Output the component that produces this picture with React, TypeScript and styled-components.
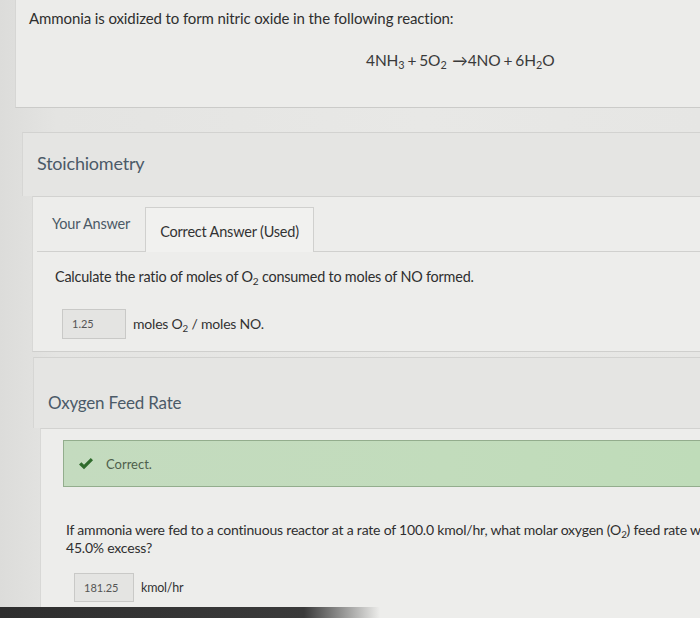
import { ReactNode } from "react";
import styled, { createGlobalStyle } from "styled-components";

const GlobalStyle = createGlobalStyle`
  html, body {
    margin: 0;
    padding: 0;
    background: #e2e2e0;
    font-family: Lato, "Open Sans", "Liberation Sans", sans-serif;
    color: #333;
    overflow: hidden;
  }
`;

const Page = styled.div`
  width: 700px;
  height: 618px;
  position: relative;
  overflow: hidden;
  background: linear-gradient(90deg, #dcdcda 0%, #e4e4e2 8%, #e8e8e6 60%, #e6e6e4 100%);
`;

const IntroPanel = styled.div`
  margin-left: 15px;
  height: 108px;
  box-sizing: border-box;
  padding: 9px 0 0 13px;
  background: #ececea;
  border-left: 1px solid #d6d6d4;
  border-bottom: 1px solid #cbcbc9;
`;

const IntroText = styled.p`
  margin: 0;
  font-size: 15px;
  letter-spacing: -0.1px;
  color: #2f2f2f;
`;

const Equation = styled.div`
  margin: 24px 0 0 337px;
  font-size: 15.5px;
  color: #3a3a3a;
  letter-spacing: -0.1px;
  word-spacing: -1px;
`;

const Section = styled.section<{ $top: number; $left: number }>`
  margin-top: ${({ $top }) => $top}px;
  margin-left: ${({ $left }) => $left}px;
`;

const SectionHeader = styled.div<{ $height: number; $pad: number }>`
  height: ${({ $height }) => $height}px;
  box-sizing: border-box;
  display: flex;
  align-items: flex-end;
  padding: 0 0 ${({ $pad }) => $pad}px 14px;
  background: #e5e5e3;
  border-top: 1px solid #d2d2d0;
  border-left: 1px solid #d6d6d4;
`;

const SectionTitle = styled.h2<{ $size: number }>`
  margin: 0;
  font-weight: 400;
  font-size: ${({ $size }) => $size}px;
  color: #4b5a68;
  letter-spacing: -0.2px;
`;

const SectionBody = styled.div<{ $left: number; $height: number }>`
  margin-left: ${({ $left }) => $left}px;
  height: ${({ $height }) => $height}px;
  box-sizing: border-box;
  background: #ededeb;
  border-left: 1px solid #d8d8d6;
  border-top: 1px solid #d2d2d0;
  border-bottom: 1px solid #cfcfcd;
`;

const TabBar = styled.div`
  display: flex;
  align-items: flex-end;
  margin: 9px 0 0 4px;
  height: 45px;
  border-bottom: 1px solid #d0d0ce;
`;

const Tab = styled.div<{ $active?: boolean }>`
  height: ${({ $active }) => ($active ? "45px" : "40px")};
  box-sizing: border-box;
  display: flex;
  align-items: center;
  padding: 0 14px;
  font-size: 14.5px;
  letter-spacing: -0.2px;
  color: ${({ $active }) => ($active ? "#333" : "#4b5966")};
  background: ${({ $active }) => ($active ? "#f1f1ef" : "transparent")};
  border: 1px solid ${({ $active }) => ($active ? "#d0d0ce" : "transparent")};
  border-bottom: none;
  margin-bottom: ${({ $active }) => ($active ? "-1px" : "8px")};
  padding-top: ${({ $active }) => ($active ? "2px" : "0")};
`;

const Prompt = styled.p<{ $size: number; $top: number; $left: number }>`
  margin: ${({ $top }) => $top}px 0 0 ${({ $left }) => $left}px;
  font-size: ${({ $size }) => $size}px;
  line-height: 1.3;
  letter-spacing: -0.2px;
  color: #2f2f2f;
  white-space: nowrap;
`;

const AnswerRow = styled.div<{ $top: number; $left: number }>`
  display: flex;
  align-items: center;
  gap: 7px;
  margin: ${({ $top }) => $top}px 0 0 ${({ $left }) => $left}px;
`;

const AnswerBox = styled.div<{ $width: number; $height: number }>`
  width: ${({ $width }) => $width}px;
  height: ${({ $height }) => $height}px;
  box-sizing: border-box;
  display: flex;
  align-items: center;
  padding-left: 9px;
  font-size: 11px;
  color: #555;
  background: #e4e4e2;
  border: 1px solid #c9c9c7;
`;

const Unit = styled.span<{ $size: number }>`
  font-size: ${({ $size }) => $size}px;
  color: #333;
  letter-spacing: -0.2px;
`;

const Feedback = styled.div`
  display: flex;
  align-items: center;
  gap: 12px;
  margin: 11px 0 0 22px;
  height: 47px;
  box-sizing: border-box;
  padding-left: 14px;
  background: linear-gradient(90deg, #c4dbbf 0%, #c2dcbc 60%, #bfdcb9 100%);
  border: 1px solid #93ad8d;
  border-right: none;
  font-size: 13px;
  color: #4f5f4c;
`;

const CheckIcon = styled.svg`
  width: 16px;
  height: 14px;
  flex: none;
`;

const BottomEdge = styled.div`
  position: absolute;
  left: 0;
  bottom: 0;
  width: 380px;
  height: 11px;
  background: linear-gradient(90deg, #2e2e2e 0%, #3a3a3a 80%, rgba(60, 60, 60, 0) 100%);
`;

function Sub({ children }: { children: ReactNode }) {
  return <sub style={{ fontSize: "0.7em", verticalAlign: "-0.3em", lineHeight: 0 }}>{children}</sub>;
}

export default function App() {
  return (
    <Page>
      <GlobalStyle />
      <IntroPanel>
        <IntroText>Ammonia is oxidized to form nitric oxide in the following reaction:</IntroText>
        <Equation>
          4NH<Sub>3</Sub> + 5O<Sub>2</Sub>&nbsp; →4NO + 6H<Sub>2</Sub>O
        </Equation>
      </IntroPanel>

      <Section $top={24} $left={22}>
        <SectionHeader $height={64} $pad={22}>
          <SectionTitle $size={18}>Stoichiometry</SectionTitle>
        </SectionHeader>
        <SectionBody $left={10} $height={156}>
          <TabBar>
            <Tab>Your Answer</Tab>
            <Tab $active>Correct Answer (Used)</Tab>
          </TabBar>
          <Prompt $size={14.4} $top={16} $left={22}>
            Calculate the ratio of moles of O<Sub>2</Sub> consumed to moles of NO formed.
          </Prompt>
          <AnswerRow $top={22} $left={29}>
            <AnswerBox $width={64} $height={30}>1.25</AnswerBox>
            <Unit $size={14}>
              moles O<Sub>2</Sub> / moles NO.
            </Unit>
          </AnswerRow>
        </SectionBody>
      </Section>

      <Section $top={5} $left={33}>
        <SectionHeader $height={71} $pad={15}>
          <SectionTitle $size={17}>Oxygen Feed Rate</SectionTitle>
        </SectionHeader>
        <SectionBody $left={7} $height={203}>
          <Feedback>
            <CheckIcon viewBox="0 0 16 14">
              <path d="M1 7.5 L3.4 5.2 L6 7.8 L12.8 1 L15 3.3 L6 12.3 Z" fill="#2f6b2c" />
            </CheckIcon>
            Correct.
          </Feedback>
          <Prompt $size={14} $top={34} $left={25}>
            If ammonia were fed to a continuous reactor at a rate of 100.0 kmol/hr, what molar oxygen (O<Sub>2</Sub>) feed rate w
            <br />
            45.0% excess?
          </Prompt>
          <AnswerRow $top={16} $left={33}>
            <AnswerBox $width={60} $height={29}>181.25</AnswerBox>
            <Unit $size={12.5}>kmol/hr</Unit>
          </AnswerRow>
        </SectionBody>
      </Section>
      <BottomEdge />
    </Page>
  );
}
